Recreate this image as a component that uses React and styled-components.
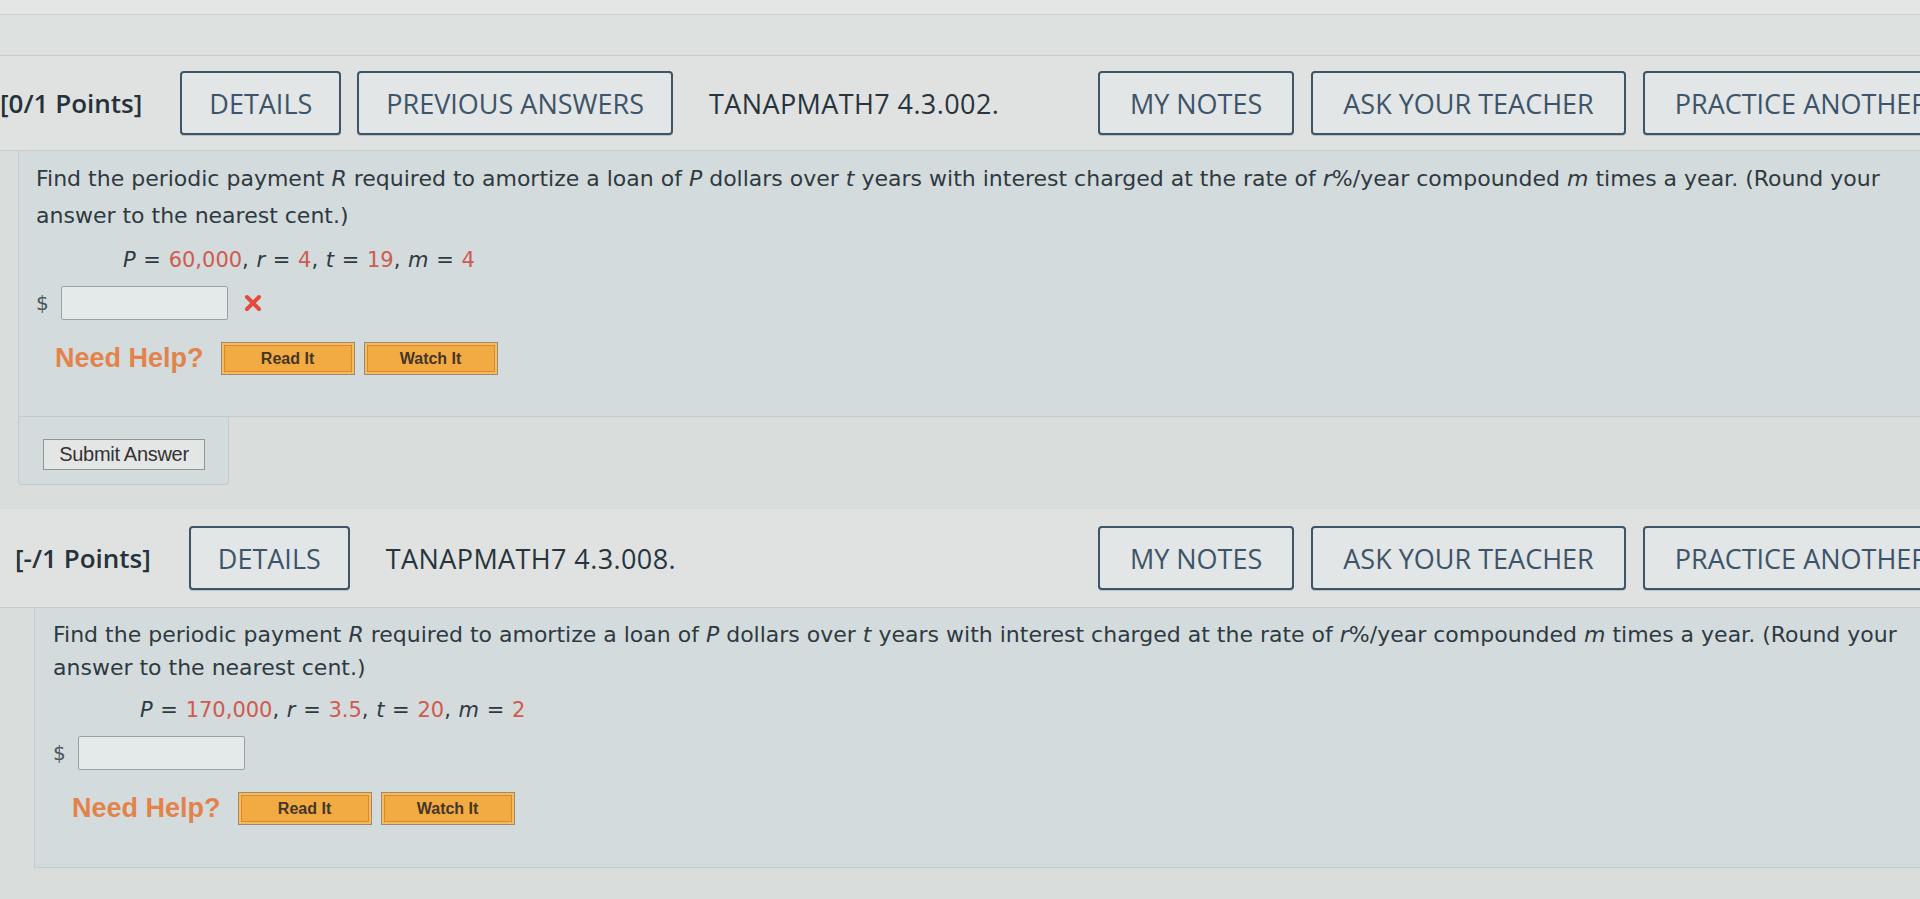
import React from "react";
import styled, { createGlobalStyle } from "styled-components";

const GlobalStyle = createGlobalStyle`
  html, body {
    margin: 0;
    padding: 0;
    background: #d9dedd;
  }
  body {
    font-family: "Open Sans", "Liberation Sans", sans-serif;
    color: #27343d;
    overflow: hidden;
  }
`;

const Page = styled.div`
  width: 1920px;
  height: 899px;
  overflow: hidden;
`;

const TopStrip = styled.div`
  height: 14px;
  background: #e3e6e5;
  border-bottom: 1px solid #c9cfce;
`;

const TopBand = styled.div`
  height: 40px;
  background: #dde1e0;
  border-bottom: 1px solid #c6cccb;
`;

const HeaderRow = styled.div`
  display: flex;
  align-items: center;
  width: 1960px;
  height: ${(p) => p.$height}px;
  padding-left: ${(p) => p.$indent}px;
  box-sizing: border-box;
  background: #dfe2e1;
  border-bottom: 1px solid #c6cccb;
`;

const Points = styled.span`
  font-size: 26px;
  font-weight: 600;
  color: #26323b;
  margin-right: 22px;
  white-space: nowrap;
`;

const OutlineButton = styled.button`
  height: 64px;
  padding: 0 ${(p) => (p.$wide ? 30 : 27)}px;
  border: 2px solid #3e5467;
  border-radius: 4px;
  background: #e2e6e6;
  font-family: "Open Sans", "Liberation Sans", sans-serif;
  font-size: 27px;
  color: #3e5468;
  text-transform: uppercase;
  white-space: nowrap;
  box-shadow: 0 1px 0 #b9c0c1;
`;

const LeftGroup = styled.div`
  display: flex;
  align-items: center;
  gap: 16px;
`;

const RightGroup = styled.div`
  display: flex;
  align-items: center;
  gap: 17px;
  margin-left: auto;
`;

const ProblemId = styled.span`
  font-size: 27px;
  letter-spacing: 0.4px;
  color: #27343d;
  margin-left: 20px;
  white-space: nowrap;
`;

const Body = styled.div`
  display: flex;
  flex-direction: column;
  padding-left: ${(p) => p.$indent}px;
`;

const QuestionBox = styled.div`
  background: #d4dbdc;
  border-left: 1px solid #c3cacb;
  border-bottom: 1px solid #c3cacb;
  padding: ${(p) => p.$pad};
  min-height: ${(p) => p.$minHeight}px;
  box-sizing: border-box;
`;

const Prompt = styled.p`
  margin: 0;
  max-width: 1872px;
  font-family: "DejaVu Sans", Verdana, sans-serif;
  font-size: 22px;
  line-height: ${(p) => p.$lh}px;
  color: #2e3a42;
`;

const Var = styled.i`
  font-style: italic;
`;

const Formula = styled.div`
  margin: 8px 0 0 87px;
  font-family: "DejaVu Sans", Verdana, sans-serif;
  font-size: 21px;
  line-height: 36px;
  word-spacing: 1px;
  color: #2e3a42;
`;

const Value = styled.span`
  color: #cf5a4f;
`;

const AnswerRow = styled.div`
  display: flex;
  align-items: center;
  gap: 12px;
  margin-top: 8px;
  font-family: "DejaVu Sans", Verdana, sans-serif;
  font-size: 20px;
  color: #4a565e;
`;

const AnswerInput = styled.input`
  width: 167px;
  height: 34px;
  box-sizing: border-box;
  background: #e4e9e9;
  border: 1px solid #97a2a4;
  border-radius: 2px;
`;

const WrongMark = styled.svg`
  margin-left: 4px;
`;

const HelpRow = styled.div`
  display: flex;
  align-items: center;
  gap: 9px;
  margin: 22px 0 0 19px;
`;

const NeedHelp = styled.span`
  font-family: "Liberation Sans", Arial, sans-serif;
  font-weight: 700;
  font-size: 27px;
  color: #e3834a;
  margin-right: 8px;
`;

const HelpButton = styled.button`
  width: 134px;
  height: 33px;
  background: #f2ab42;
  border: 1px solid #9a8a74;
  box-shadow: inset 0 0 0 2px #f6bb5c, inset 0 0 0 3px #d98a2f;
  font-family: "Liberation Sans", Arial, sans-serif;
  font-weight: 700;
  font-size: 16px;
  color: #45362a;
`;

const SubmitBox = styled.div`
  width: 211px;
  height: 68px;
  box-sizing: border-box;
  background: #d4dbdc;
  border: 1px solid #c3cacb;
  border-top: none;
  border-radius: 0 0 4px 4px;
  padding: 22px 0 0 24px;
`;

const SubmitButton = styled.button`
  width: 162px;
  height: 31px;
  padding: 0;
  background: #e4e5e5;
  border: 1px solid #8f9596;
  font-family: "Liberation Sans", Arial, sans-serif;
  font-size: 20px;
  letter-spacing: -0.3px;
  color: #333;
`;

const Gap = styled.div`
  height: ${(p) => p.$h}px;
`;

const Problem = ({ points, showPrev, id, indent, values, wrong, submit, boxPad, minHeight, headerHeight, lineHeight }) => (
  <>
    <HeaderRow $indent={indent.header} $height={headerHeight}>
      <LeftGroup>
        <Points>{points}</Points>
        <OutlineButton>Details</OutlineButton>
        {showPrev && <OutlineButton>Previous Answers</OutlineButton>}
        <ProblemId>{id}</ProblemId>
      </LeftGroup>
      <RightGroup>
        <OutlineButton $wide>My Notes</OutlineButton>
        <OutlineButton $wide>Ask Your Teacher</OutlineButton>
        <OutlineButton $wide>Practice Another</OutlineButton>
      </RightGroup>
    </HeaderRow>
    <Body $indent={indent.body}>
      <QuestionBox $pad={boxPad} $minHeight={minHeight}>
        <Prompt $lh={lineHeight}>
          Find the periodic payment <Var>R</Var> required to amortize a loan of <Var>P</Var> dollars over{" "}
          <Var>t</Var> years with interest charged at the rate of <Var>r</Var>%/year compounded{" "}
          <Var>m</Var> times a year. (Round your answer to the nearest cent.)
        </Prompt>
        <Formula>
          <Var>P</Var> = <Value>{values.P}</Value>, <Var>r</Var> = <Value>{values.r}</Value>,{" "}
          <Var>t</Var> = <Value>{values.t}</Value>, <Var>m</Var> = <Value>{values.m}</Value>
        </Formula>
        <AnswerRow>
          $ <AnswerInput />
          {wrong && (
            <WrongMark width="18" height="18" viewBox="0 0 18 18">
              <path d="M3 3 L15 15 M15 3 L3 15" stroke="#e2493f" strokeWidth="4" strokeLinecap="round" />
            </WrongMark>
          )}
        </AnswerRow>
        <HelpRow>
          <NeedHelp>Need Help?</NeedHelp>
          <HelpButton>Read It</HelpButton>
          <HelpButton>Watch It</HelpButton>
        </HelpRow>
      </QuestionBox>
      {submit && (
        <SubmitBox>
          <SubmitButton>Submit Answer</SubmitButton>
        </SubmitBox>
      )}
    </Body>
  </>
);

export default function App() {
  return (
    <Page>
      <GlobalStyle />
      <TopStrip />
      <TopBand />
      <Problem
        points="[0/1 Points]"
        showPrev
        id="TANAPMATH7 4.3.002."
        indent={{ header: 0, body: 18 }}
        values={{ P: "60,000", r: "4", t: "19", m: "4" }}
        wrong
        submit
        boxPad="9px 0 0 17px"
        minHeight={266}
        headerHeight={95}
        lineHeight={37}
      />
      <Gap $h={24} />
      <Problem
        points="[-/1 Points]"
        id="TANAPMATH7 4.3.008."
        indent={{ header: 15, body: 34 }}
        values={{ P: "170,000", r: "3.5", t: "20", m: "2" }}
        boxPad="10px 0 0 18px"
        minHeight={260}
        headerHeight={99}
        lineHeight={33}
      />
    </Page>
  );
}
